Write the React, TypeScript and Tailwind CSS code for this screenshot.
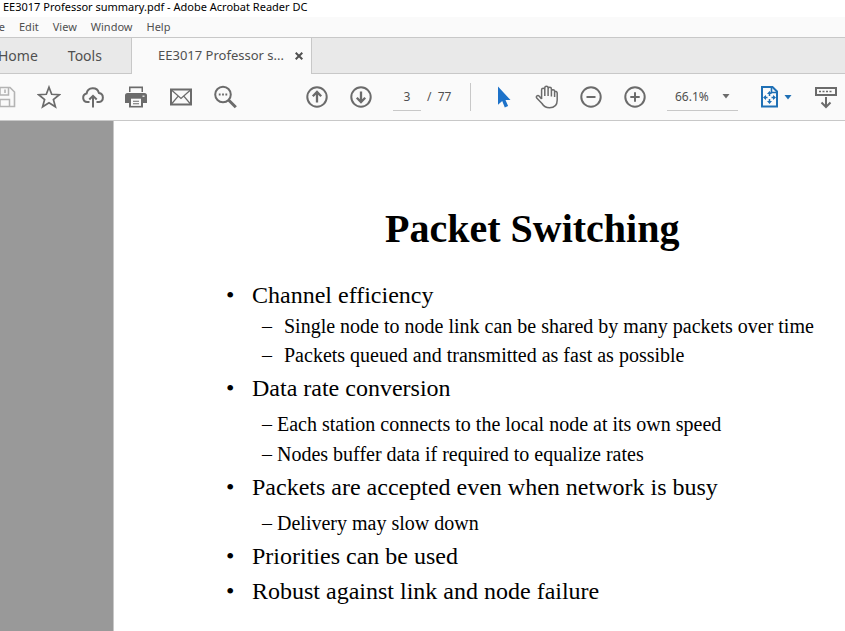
import React, { useState } from 'react';

const menus = ['Edit', 'View', 'Window', 'Help'];

const outline = [
  {
    text: 'Channel efficiency',
    loose: false,
    items: [
      'Single node to node link can be shared by many packets over time',
      'Packets queued and transmitted as fast as possible',
    ],
  },
  {
    text: 'Data rate conversion',
    loose: true,
    items: [
      'Each station connects to the local node at its own speed',
      'Nodes buffer data if required to equalize rates',
    ],
  },
  {
    text: 'Packets are accepted even when network is busy',
    loose: true,
    items: ['Delivery may slow down'],
  },
  { text: 'Priorities can be used', loose: false, items: [] },
  { text: 'Robust against link and node failure', loose: false, items: [] },
];

function Icon({ children }: { children: React.ReactNode }) {
  return (
    <svg viewBox="0 0 24 24" className="w-6 h-6 shrink-0" fill="none" stroke="currentColor" strokeWidth="2" aria-hidden="true">
      {children}
    </svg>
  );
}

interface ToolButtonProps {
  label: string;
  className?: string;
  children: React.ReactNode;
}

function ToolButton({ label, className = '', children }: ToolButtonProps) {
  return (
    <button type="button" aria-label={label} className={`w-11 h-full shrink-0 flex items-center justify-center ${className}`}>
      <Icon>{children}</Icon>
    </button>
  );
}

function Toolbar() {
  const [page, setPage] = useState('3');
  const [zoom, setZoom] = useState('66.1%');

  return (
    <div className="h-[47px] flex items-center bg-[#fafafa] border-b border-[#c8c8c8] text-[#6b6b6b] overflow-hidden">
      <ToolButton label="Save" className="-ml-[17px] text-[#b4b4b4]">
        <path d="M3 2.500h14l4.500 4.500v14.500H3z" strokeWidth="1.600" />
        <path d="M7 3v7h8.500V3M7 21v-6.500h9.500V21" strokeWidth="1.500" />
        <path d="M12 4.500v3.500" strokeWidth="1.600" />
      </ToolButton>
      <ToolButton label="Star">
        <path d="M12 2.200l2.700 7.100 7.600.4-5.900 4.800 2 7.300L12 17.700l-6.400 4.100 2-7.300-5.900-4.800 7.600-.4z" strokeWidth="1.700" />
      </ToolButton>
      <ToolButton label="Upload">
        <path d="M8.500 17H6.300a4.300 4.300 0 0 1-.7-8.500 6.300 6.300 0 0 1 12.300-.6A4.600 4.600 0 0 1 18 17h-2.500" />
        <path d="M12 22.500V11M8.300 14.500L12 10.800l3.700 3.700" />
      </ToolButton>
      <ToolButton label="Print">
        <path d="M4 1.500h14v5.500H4z" fill="currentColor" stroke="none" />
        <path d="M5.500 3.200h11V8h-11z" fill="#fafafa" stroke="none" />
        <path d="M2.500 8h17A2.500 2.500 0 0 1 22 10.500V18h-4v4.500H4V18H0v-7.500A2.500 2.500 0 0 1 2.500 8z" fill="currentColor" stroke="none" />
        <path d="M6 13.700h10v7.200H6z" fill="#fafafa" stroke="none" />
        <path d="M8 16.200h6M8 18.700h6" strokeWidth="1.100" />
        <path d="M17.500 11.200h2" stroke="#fafafa" strokeWidth="1.200" />
      </ToolButton>
      <ToolButton label="Mail">
        <path d="M2 4.500h20v15H2z" />
        <path d="M2.500 5l9.500 8.500L21.500 5M2.500 19l6.700-7.800M21.500 19l-6.700-7.800" strokeWidth="1.300" />
      </ToolButton>
      <ToolButton label="Find">
        <circle cx="10" cy="9.500" r="7.800" />
        <path d="M15.800 15.300l7 7" strokeWidth="3" />
        <path d="M5.800 9.500h1.800M9.100 9.500h1.800M12.400 9.500h1.800" strokeWidth="1.800" />
      </ToolButton>

      <ToolButton label="Previous page" className="ml-12">
        <circle cx="12" cy="12" r="9.700" />
        <path d="M12 17.500V7M7.800 11.200L12 7l4.200 4.200" strokeWidth="2.300" />
      </ToolButton>
      <ToolButton label="Next page">
        <circle cx="12" cy="12" r="9.700" />
        <path d="M12 6.500V17M7.800 12.800L12 17l4.200-4.200" strokeWidth="2.300" />
      </ToolButton>
      <input
        aria-label="Page number"
        value={page}
        onChange={(e) => setPage(e.target.value)}
        className="ml-[10px] w-7 h-7 shrink-0 border-b border-[#c8c8c8] bg-transparent text-center text-xs text-[#505050] outline-none"
      />
      <span className="ml-[6px] w-[43px] shrink-0 text-xs text-[#505050]">/&nbsp; 77</span>
      <div className="w-px h-7 shrink-0 bg-[#c8c8c8]" />

      <ToolButton label="Select" className="ml-[10px] text-[#1d72c9]">
        <path d="M7 1.500v18.300l4.200-3.700 2.600 6.400 3.300-1.400-2.600-6.100H19.500z" fill="currentColor" stroke="none" />
      </ToolButton>
      <ToolButton label="Hand">
        <path
          d="M6.600 14V4.800a1.600 1.600 0 0 1 3.200 0V11M9.800 5.500V3a1.650 1.650 0 0 1 3.300 0v8M13.100 4a1.650 1.650 0 0 1 3.300 0v7.500M16.400 6.500a1.600 1.600 0 0 1 3.200-.2c1.500-.2 2.600.5 2.600 2V15c0 4.700-2.800 7.800-7.700 7.800-3.700 0-5.800-1.500-7.500-4.300L1.700 13c-1-1.900 1-3.200 2.600-1.800L6.600 14M19.600 6.300V12"
          strokeWidth="1.500"
          strokeLinejoin="round"
        />
      </ToolButton>
      <ToolButton label="Zoom out">
        <circle cx="12" cy="12" r="9.700" />
        <path d="M7.500 12h9" />
      </ToolButton>
      <ToolButton label="Zoom in">
        <circle cx="12" cy="12" r="9.700" />
        <path d="M7.300 12h9.400M12 7.300v9.400" />
      </ToolButton>
      <div className="ml-[10px] w-[71px] h-7 shrink-0 relative border-b border-[#c8c8c8]">
        <select
          aria-label="Zoom level"
          value={zoom}
          onChange={(e) => setZoom(e.target.value)}
          className="w-full h-full pl-2 appearance-none bg-transparent text-xs text-[#505050] outline-none"
        >
          <option>66.1%</option>
          <option>100%</option>
        </select>
        <svg viewBox="0 0 8 5" className="w-2 h-[5px] absolute right-2 top-[11px] pointer-events-none" fill="currentColor" aria-hidden="true">
          <path d="M.5 0h7L4 4.500z" />
        </svg>
      </div>
      <button type="button" aria-label="Fit page" className="ml-5 w-9 h-full shrink-0 flex items-center text-[#1f70b5]">
        <Icon>
          <path d="M4 2h10.500l4.500 4.500V21.500H4z" />
          <path d="M13.500 2v5.500H19" strokeWidth="1.600" />
          <path d="M11.500 8v3M11.500 14v3M6.500 12.500h3M13.500 12.500h3" strokeWidth="1.500" />
          <path d="M11.500 6l2.500 3H9zM11.500 19l2.500-3H9zM5 12.500l3-2.500v5zM18 12.500l-3-2.500v5z" fill="currentColor" stroke="none" />
        </Icon>
        <svg viewBox="0 0 8 5" className="ml-[2px] w-2 h-[5px] shrink-0" fill="currentColor" aria-hidden="true">
          <path d="M.5 0h7L4 4.500z" />
        </svg>
      </button>
      <ToolButton label="Show toolbar" className="ml-[10px]">
        <path d="M2 3h20v7H2z" />
        <path d="M5 6.500h14" strokeWidth="1.600" strokeDasharray="2 1.500" />
        <path d="M12 12v10M7.500 17.500L12 22l4.500-4.500" />
      </ToolButton>
    </div>
  );
}

function Slide() {
  return (
    <article className="flex-1 bg-white border-l border-[#c8c8c8] pt-[84px] pb-5 font-['Liberation_Serif',serif] text-black">
      <h1 className="pl-[271px] text-[40px] leading-[48px] font-bold whitespace-nowrap">Packet Switching</h1>
      <ul className="mt-[26px] pl-28 flex flex-col gap-[3px]">
        {outline.map((point) => (
          <li key={point.text} className="whitespace-nowrap">
            <div className="flex text-2xl leading-8">
              <span className="w-[26px]">•</span>
              <span>{point.text}</span>
            </div>
            {point.items.length > 0 && (
              <ul className={`pl-9 text-xl leading-7 flex flex-col ${point.loose ? 'pt-[6px] gap-[2px]' : 'pt-px gap-px'}`}>
                {point.items.map((item) => (
                  <li key={item} className="flex">
                    <span className={point.loose ? 'w-[15px]' : 'w-[22px]'}>–</span>
                    <span>{item}</span>
                  </li>
                ))}
              </ul>
            )}
          </li>
        ))}
      </ul>
    </article>
  );
}

export default function App() {
  return (
    <div className="min-h-screen flex flex-col overflow-hidden bg-white font-['Noto_Sans',sans-serif]">
      <header>
        <div className="h-[17px] pl-[3px] flex items-start text-[11px] leading-[13px] text-black whitespace-nowrap">
          EE3017 Professor summary.pdf - Adobe Acrobat Reader DC
        </div>
        <nav className="h-5 flex items-center gap-[14px] bg-[#fafafa] text-[11px] leading-5 text-[#505050]">
          <button type="button" className="w-[5px] flex justify-end">
            File
          </button>
          {menus.map((menu) => (
            <button key={menu} type="button">
              {menu}
            </button>
          ))}
        </nav>
        <div className="h-[37px] flex border-t border-[#c8c8c8] bg-[#e9e9e9] text-[#505050]">
          <div className="w-[131px] shrink-0 flex items-center gap-[30px] border-b border-[#c8c8c8] text-sm">
            <button type="button" className="-ml-[2px]">
              Home
            </button>
            <button type="button">Tools</button>
          </div>
          <div className="w-[181px] shrink-0 pl-[26px] pr-2 flex items-center justify-between border-x border-[#c8c8c8] bg-[#fafafa]">
            <span className="text-[13px] whitespace-nowrap">EE3017 Professor s...</span>
            <button type="button" aria-label="Close tab">
              <svg viewBox="0 0 8 8" className="w-2 h-2" fill="none" stroke="currentColor" strokeWidth="2" aria-hidden="true">
                <path d="M.7.7l6.600 6.600M7.300.7L.7 7.300" />
              </svg>
            </button>
          </div>
          <div className="flex-1 border-b border-[#c8c8c8]" />
        </div>
        <Toolbar />
      </header>
      <main className="flex-1 flex bg-[#999999]">
        <div className="w-[113px] shrink-0" />
        <Slide />
      </main>
    </div>
  );
}
